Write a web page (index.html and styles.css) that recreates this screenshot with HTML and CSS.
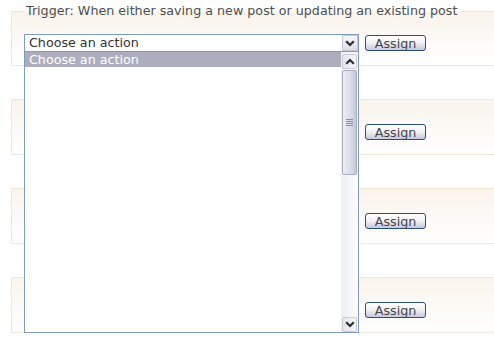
FILE: index.html
```html
<!DOCTYPE html>
<html lang="en">
<head>
    <meta charset="UTF-8">
    <title>Assign actions</title>
    <link rel="stylesheet" href="styles.css">
</head>
<body>

  <fieldset class="box box-titled">
    <legend>Trigger: When either saving a new post or updating an existing post</legend>
    <div class="row">
      <div class="select">
        <span class="select-text">Choose an action</span>
        <span class="select-arrow">
          <svg width="10" height="7" viewBox="0 0 10 7"><path d="M1.2 1.2 L5 5 L8.8 1.2" fill="none" stroke="#2e2e2e" stroke-width="2.2"/></svg>
        </span>
      </div>
      <button type="button" class="assign">Assign</button>
    </div>
  </fieldset>

  <fieldset class="box">
    <div class="row">
      <div class="select"><span class="select-text">Choose an action</span></div>
      <button type="button" class="assign">Assign</button>
    </div>
  </fieldset>

  <fieldset class="box">
    <div class="row">
      <div class="select"><span class="select-text">Choose an action</span></div>
      <button type="button" class="assign">Assign</button>
    </div>
  </fieldset>

  <fieldset class="box">
    <div class="row">
      <div class="select"><span class="select-text">Choose an action</span></div>
      <button type="button" class="assign">Assign</button>
    </div>
  </fieldset>

  <!-- open dropdown of the first select -->
  <div class="dropdown">
    <div class="options">
      <div class="option selected">Choose an action</div>
    </div>
    <div class="scrollbar">
      <div class="scroll-btn">
        <svg width="10" height="7" viewBox="0 0 10 7"><path d="M1.2 5.8 L5 2 L8.8 5.8" fill="none" stroke="#2e2e2e" stroke-width="2.2"/></svg>
      </div>
      <div class="scroll-track">
        <div class="scroll-thumb"><span class="grip"></span></div>
      </div>
      <div class="scroll-btn">
        <svg width="10" height="7" viewBox="0 0 10 7"><path d="M1.2 1.2 L5 5 L8.8 1.2" fill="none" stroke="#2e2e2e" stroke-width="2.2"/></svg>
      </div>
    </div>
  </div>

</body>
</html>
```

FILE: styles.css
```css
html {
    overflow: hidden;
}

body {
    font-family: "DejaVu Sans", Verdana, sans-serif;
    font-size: 12.7px;
    color: #4a4a4a;
    margin: 0;
    padding-top: 4px;
    overflow: hidden;
    background: #fff;
}

.box {
    margin: 0 -12px 33px 11px;
    padding: 23px 12px 13px;
    border: 1px solid #f0e7d6;
    background: linear-gradient(#faf4ec, #fff);
    min-width: 0;
}

.box:last-of-type {
    margin-bottom: 0;
}

.box-titled {
    padding-top: 16px;
}

.box legend {
    padding: 0 2px;
    line-height: 14px;
    color: #4d4d4d;
}

.row {
    display: flex;
    align-items: flex-start;
}

.select {
    box-sizing: border-box;
    width: 335px;
    height: 18px;
    border: 1px solid #7f9db9;
    background: #fff;
    display: flex;
    align-items: center;
    justify-content: space-between;
    padding-left: 4px;
    color: #333;
}

.select-text {
    line-height: 14px;
}

.select-arrow {
    box-sizing: border-box;
    width: 16px;
    height: 16px;
    border: 1px solid #c6cad8;
    background: linear-gradient(#f8f8fb, #dcdde6);
    display: flex;
    align-items: center;
    justify-content: center;
}

.assign {
    box-sizing: border-box;
    width: 61px;
    height: 16px;
    margin: 1px 0 0 6px;
    padding: 0;
    border: 1px solid #2a4f7d;
    border-radius: 3px;
    background: linear-gradient(#ffffff 0%, #f3f3f7 45%, #c6c8dc 100%);
    font-family: "DejaVu Sans", Verdana, sans-serif;
    font-size: 12.7px;
    line-height: 13px;
    color: #444;
}

.dropdown {
    position: absolute;
    left: 24px;
    top: 51px;
    box-sizing: border-box;
    width: 335px;
    height: 282px;
    border: 1px solid #7f9db9;
    background: #fff;
    display: flex;
}

.options {
    flex: 1;
}

.option {
    height: 15px;
    line-height: 15px;
    padding-left: 4px;
}

.option.selected {
    background: #acaebe;
    color: #fff;
}

.scrollbar {
    width: 16px;
    padding: 2px 0 0 1px;
    display: flex;
    flex-direction: column;
    background: linear-gradient(to right, #eeeff4, #fbfbfd);
}

.scroll-btn {
    box-sizing: border-box;
    width: 15px;
    height: 15px;
    border: 1px solid #c9ccd8;
    border-radius: 2px;
    background: linear-gradient(to right, #e4e6ee, #f6f6fa);
    display: flex;
    align-items: center;
    justify-content: center;
}

.scroll-track {
    flex: 1;
    padding-top: 1px;
}

.scroll-thumb {
    box-sizing: border-box;
    width: 15px;
    height: 105px;
    border: 1px solid #a9adc1;
    border-radius: 2px;
    background: linear-gradient(to right, #eceef4, #d6d8e4 70%, #c3c6d6);
    display: flex;
    align-items: center;
    justify-content: center;
}

.grip {
    width: 7px;
    height: 7px;
    background: repeating-linear-gradient(#8a8ea6 0 1px, transparent 1px 2px);
}
```
